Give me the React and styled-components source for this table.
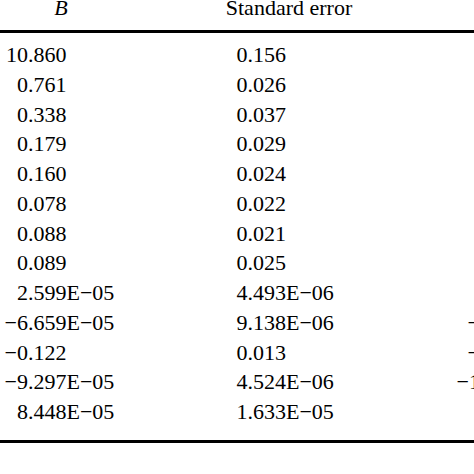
import React from 'react';
import styled, { createGlobalStyle } from 'styled-components';

const GlobalStyle = createGlobalStyle`
  html, body {
    margin: 0;
    padding: 0;
    background: #fff;
  }
  body {
    font-family: "Liberation Serif", "Times New Roman", serif;
    color: #000;
  }
`;

/**
 * Clipping frame: the table runs past the right edge of the picture
 */
const Frame = styled.div`
  width: 474px;
  height: 474px;
  overflow: hidden;
  background: #fff;
`;

const Table = styled.table`
  table-layout: fixed;
  border-collapse: separate;
  border-spacing: 0;
  width: 590px;
  font-size: 22px;
`;

const HeadCell = styled.th`
  font-weight: normal;
  font-style: ${({ italic }) => (italic ? 'italic' : 'normal')};
  text-align: center;
  white-space: nowrap;
  line-height: 16px;
  padding: 0 0 14px;
  border-bottom: 3px solid #000;
`;

const Cell = styled.td`
  padding: 0;
  padding-top: ${({ first }) => (first ? '7px' : '0')};
  padding-bottom: ${({ last }) => (last ? '13px' : '0')};
  border-bottom: ${({ last }) => (last ? '3px solid #000' : 'none')};
  line-height: 29.75px;
  white-space: nowrap;
  text-align: left;
`;

/**
 * Integer part: right-aligned so the decimal points line up
 */
const IntPart = styled.span`
  display: inline-block;
  width: ${({ w }) => w}px;
  text-align: right;
`;

const columns = [
  { width: 122, intWidth: 28 },
  { width: 334, intWidth: 125.5 },
  { width: 134, intWidth: 35 },
];

const rows = [
  ['10.860', '0.156', '6.962'],
  ['0.761', '0.026', '2.927'],
  ['0.338', '0.037', '9.135'],
  ['0.179', '0.029', '6.172'],
  ['0.160', '0.024', '6.667'],
  ['0.078', '0.022', '3.545'],
  ['0.088', '0.021', '4.190'],
  ['0.089', '0.025', '3.560'],
  ['2.599E−05', '4.493E−06', '5.785'],
  ['−6.659E−05', '9.138E−06', '−7.287'],
  ['−0.122', '0.013', '−9.385'],
  ['−9.297E−05', '4.524E−06', '−10.550'],
  ['8.448E−05', '1.633E−05', '5.173'],
];

function Num({ value, intWidth }) {
  const dot = value.indexOf('.');
  const head = dot >= 0 ? value.slice(0, dot) : value;
  const tail = dot >= 0 ? value.slice(dot) : '';
  return (
    <>
      <IntPart w={intWidth}>{head}</IntPart>
      {tail}
    </>
  );
}

export default function App() {
  return (
    <>
      <GlobalStyle />
      <Frame>
        <Table>
          <colgroup>
            {columns.map((c, i) => (
              <col key={i} style={{ width: c.width }} />
            ))}
          </colgroup>
          <thead>
            <tr>
              <HeadCell italic>B</HeadCell>
              <HeadCell>Standard error</HeadCell>
              <HeadCell>t</HeadCell>
            </tr>
          </thead>
          <tbody>
            {rows.map((r, ri) => (
              <tr key={ri}>
                {r.map((v, ci) => (
                  <Cell key={ci} first={ri === 0} last={ri === rows.length - 1}>
                    <Num value={v} intWidth={columns[ci].intWidth} />
                  </Cell>
                ))}
              </tr>
            ))}
          </tbody>
        </Table>
      </Frame>
    </>
  );
}
